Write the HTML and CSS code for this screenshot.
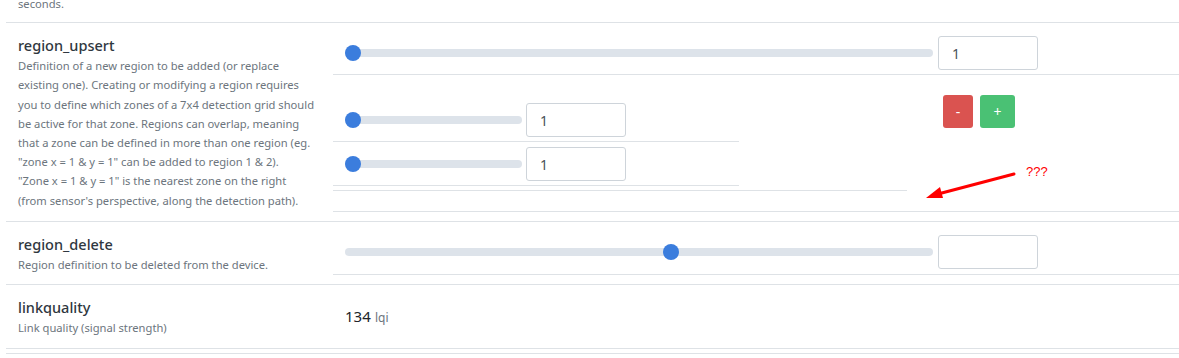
FILE: index.html
```html
<!DOCTYPE html>
<html>
<head>
<meta charset="utf-8">
<link rel="stylesheet" href="styles.css">
</head>
<body>
<div class="table">
  <div class="row row-cut">
    <div class="cell-left"><div class="desc">seconds.</div></div>
    <div class="cell-right"></div>
  </div>

  <div class="row">
    <div class="cell-left">
      <div class="title">region_upsert</div>
      <div class="desc">Definition of a new region to be added (or replace existing one). Creating or modifying a region requires you to define which zones of a 7x4 detection grid should be active for that zone. Regions can overlap, meaning that a zone can be defined in more than one region (eg. "zone x = 1 &amp; y = 1" can be added to region 1 &amp; 2).<br>"Zone x = 1 &amp; y = 1" is the nearest zone on the right<br>(from sensor's perspective, along the detection path).</div>
    </div>
    <div class="cell-right">
      <div class="item item-main">
        <input class="range" type="range" min="1" max="9" value="1">
        <input class="num" type="text" value="1">
      </div>
      <div class="zone-block">
        <div class="zone-wrap">
          <div class="zone-list">
            <div class="zone-item">
              <input class="range range-short" type="range" min="1" max="9" value="1">
              <input class="num num-zone" type="text" value="1">
            </div>
            <div class="zone-item">
              <input class="range range-short" type="range" min="1" max="9" value="1">
              <input class="num num-zone" type="text" value="1">
            </div>
          </div>
        </div>
        <div class="buttons">
          <button class="btn btn-red">-</button>
          <button class="btn btn-green">+</button>
        </div>
      </div>
    </div>
  </div>

  <div class="row">
    <div class="cell-left">
      <div class="title">region_delete</div>
      <div class="desc">Region definition to be deleted from the device.</div>
    </div>
    <div class="cell-right">
      <div class="item item-delete">
        <input class="range" type="range" min="0" max="9" value="5">
        <input class="num" type="text" value="">
      </div>
    </div>
  </div>

  <div class="row">
    <div class="cell-left">
      <div class="title">linkquality</div>
      <div class="desc">Link quality (signal strength)</div>
    </div>
    <div class="cell-right cell-value">
      <div class="value-line"><span class="value">134</span> <span class="unit">lqi</span></div>
    </div>
  </div>
  <div class="row-next"></div>
</div>

<div class="annotation">
  <svg width="130" height="40" viewBox="0 0 130 40">
    <line x1="90" y1="11" x2="14" y2="31" stroke="#ff0000" stroke-width="3" stroke-linecap="round"/>
    <polygon points="2,35 16,24 19,35" fill="#ff0000"/>
  </svg>
  <span class="anno-text">???</span>
</div>
</body>
</html>
```

FILE: styles.css
```css
html, body {
  margin: 0;
  padding: 0;
  background: #ffffff;
}

body {
  font-family: "Noto Sans", "Open Sans", sans-serif;
  color: #343a40;
  overflow: hidden;
  position: relative;
  width: 1179px;
  height: 358px;
}

.table {
  margin-left: 6px;
  width: 1190px;
}

.row {
  display: grid;
  grid-template-columns: 327px 1fr;
  border-bottom: 1px solid #dee2e6;
}

.row-cut {
  margin-top: -6px;
}

.row-cut .cell-left {
  padding: 0 12px 9px 12px;
}

.cell-left {
  padding: 11px 13px 10px 12px;
}

.cell-right {
  padding: 0 0 9px 0;
}

.title {
  font-size: 14.5px;
  font-weight: 500;
  line-height: 22px;
  color: #2f3740;
}

.desc {
  font-size: 11.2px;
  line-height: 19.2px;
  color: #6c757d;
}

.item {
  display: flex;
  align-items: center;
  padding: 13px 0 4px 12px;
  border-bottom: 1px solid #dee2e6;
}

.item-delete {
  padding-bottom: 5px;
}

.range {
  -webkit-appearance: none;
  appearance: none;
  margin: 0;
  width: 588px;
  height: 16px;
  background: transparent;
  outline: none;
}

.range::-webkit-slider-runnable-track {
  height: 8px;
  border-radius: 4px;
  background: #dde3ea;
}

.range::-webkit-slider-thumb {
  -webkit-appearance: none;
  appearance: none;
  width: 16px;
  height: 16px;
  margin-top: -4px;
  border-radius: 50%;
  background: #3b7ddd;
  border: none;
}

.range-short {
  width: 177px;
}

.num {
  box-sizing: border-box;
  width: 100px;
  height: 34px;
  margin: 0 0 0 5px;
  padding: 0 0 0 13px;
  border: 1px solid #ced4da;
  border-radius: 3px;
  font-family: "Noto Sans", sans-serif;
  font-size: 14px;
  color: #495057;
  background: #fff;
  outline: none;
}

.num-zone {
  margin-left: 4px;
}

.zone-block {
  display: flex;
  align-items: flex-start;
  padding-bottom: 20px;
  border-bottom: 1px solid #dee2e6;
}

.zone-wrap {
  width: 574px;
  padding: 23px 0 4px 0;
  border-bottom: 1px solid #dee2e6;
}

.zone-list {
  width: 406px;
}

.zone-item {
  display: flex;
  align-items: center;
  padding: 5px 0 4px 12px;
  border-bottom: 1px solid #dee2e6;
}

.buttons {
  display: flex;
  gap: 7px;
  margin: 20px 0 0 36px;
}

.btn {
  height: 33px;
  border: none;
  border-radius: 3px;
  color: #fff;
  font-family: "Noto Sans", sans-serif;
  font-size: 14px;
  padding: 0;
}

.btn-red {
  width: 30px;
  background: #da5350;
}

.btn-green {
  width: 35px;
  background: #4ac174;
}

.cell-value {
  display: flex;
  align-items: center;
  padding: 0 0 0 12px;
}

.value-line {
  line-height: 20px;
}

.value {
  font-size: 15px;
  color: #212529;
}

.unit {
  font-size: 12px;
  color: #6c757d;
}

.row-next {
  margin-top: 4px;
  border-top: 1px solid #dee2e6;
}

.annotation {
  position: absolute;
  left: 924px;
  top: 163px;
  width: 140px;
  height: 40px;
}

.annotation svg {
  position: absolute;
  left: 0;
  top: 0;
}

.anno-text {
  position: absolute;
  left: 102px;
  top: 1px;
  font-family: "Liberation Sans", Arial, sans-serif;
  font-size: 13px;
  color: #ff0000;
}
```
